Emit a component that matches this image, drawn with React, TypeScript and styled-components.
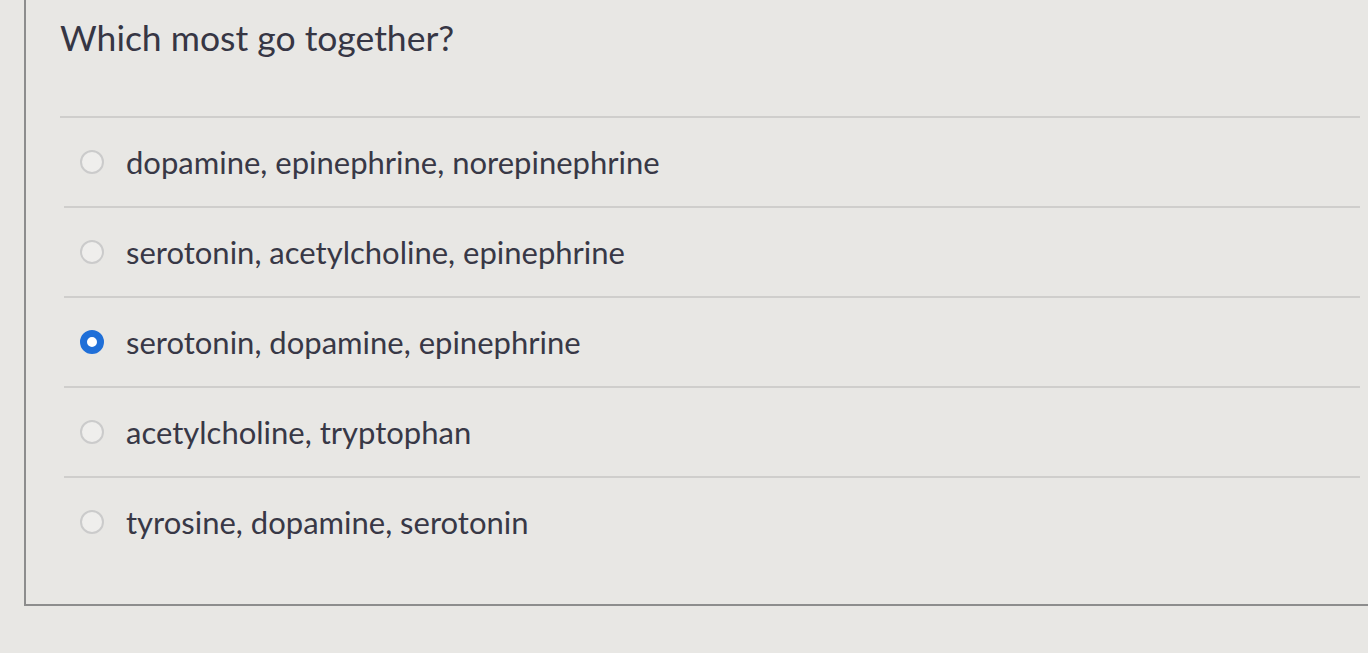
import React from "react";
import styled, { createGlobalStyle } from "styled-components";

const Global = createGlobalStyle`
  html, body { margin: 0; padding: 0; }
  body {
    background: #e8e7e4;
    font-family: Lato, "Open Sans", "Liberation Sans", sans-serif;
    color: #3c3c4a;
    -webkit-font-smoothing: antialiased;
  }
`;

const Page = styled.div`
  width: 1368px;
  height: 653px;
  overflow: hidden;
  background: #e8e7e4;
`;

const Panel = styled.section`
  margin-left: 24px;
  height: 606px;
  box-sizing: border-box;
  border-left: 2px solid #8d8d8d;
  border-bottom: 2px solid #8d8d8d;
  padding: 17px 8px 0 38px;
  display: flex;
  flex-direction: column;
`;

const Title = styled.h1`
  margin: 0 0 0 -4px;
  font-weight: 400;
  font-size: 35.5px;
  line-height: 42px;
  color: #363644;
  padding: 0 0 57px 0;
  border-bottom: 2px solid #cfcecc;
`;

const OptionList = styled.div`
  display: flex;
  flex-direction: column;
`;

const Option = styled.label<{ $last?: boolean }>`
  display: flex;
  align-items: center;
  gap: 22px;
  height: 88px;
  padding-left: 16px;
  border-bottom: ${(p) => (p.$last ? "none" : "2px solid #cfcecc")};
  font-size: 31px;
  color: #383846;
  cursor: pointer;
`;

const Radio = styled.span<{ $checked?: boolean }>`
  flex: none;
  width: 24px;
  height: 24px;
  border-radius: 50%;
  box-sizing: border-box;
  background: ${(p) => (p.$checked ? "#ffffff" : "#efeeec")};
  border: ${(p) => (p.$checked ? "7px solid #1f6fd8" : "2px solid #cbcbcb")};
`;

const options = [
  "dopamine, epinephrine, norepinephrine",
  "serotonin, acetylcholine, epinephrine",
  "serotonin, dopamine, epinephrine",
  "acetylcholine, tryptophan",
  "tyrosine, dopamine, serotonin",
];

export default function App() {
  return (
    <Page>
      <Global />
      <Panel>
        <Title>Which most go together?</Title>
        <OptionList>
          {options.map((o, i) => (
            <Option key={o} $last={i === options.length - 1}>
              <Radio $checked={i === 2} />
              <span>{o}</span>
            </Option>
          ))}
        </OptionList>
      </Panel>
    </Page>
  );
}
